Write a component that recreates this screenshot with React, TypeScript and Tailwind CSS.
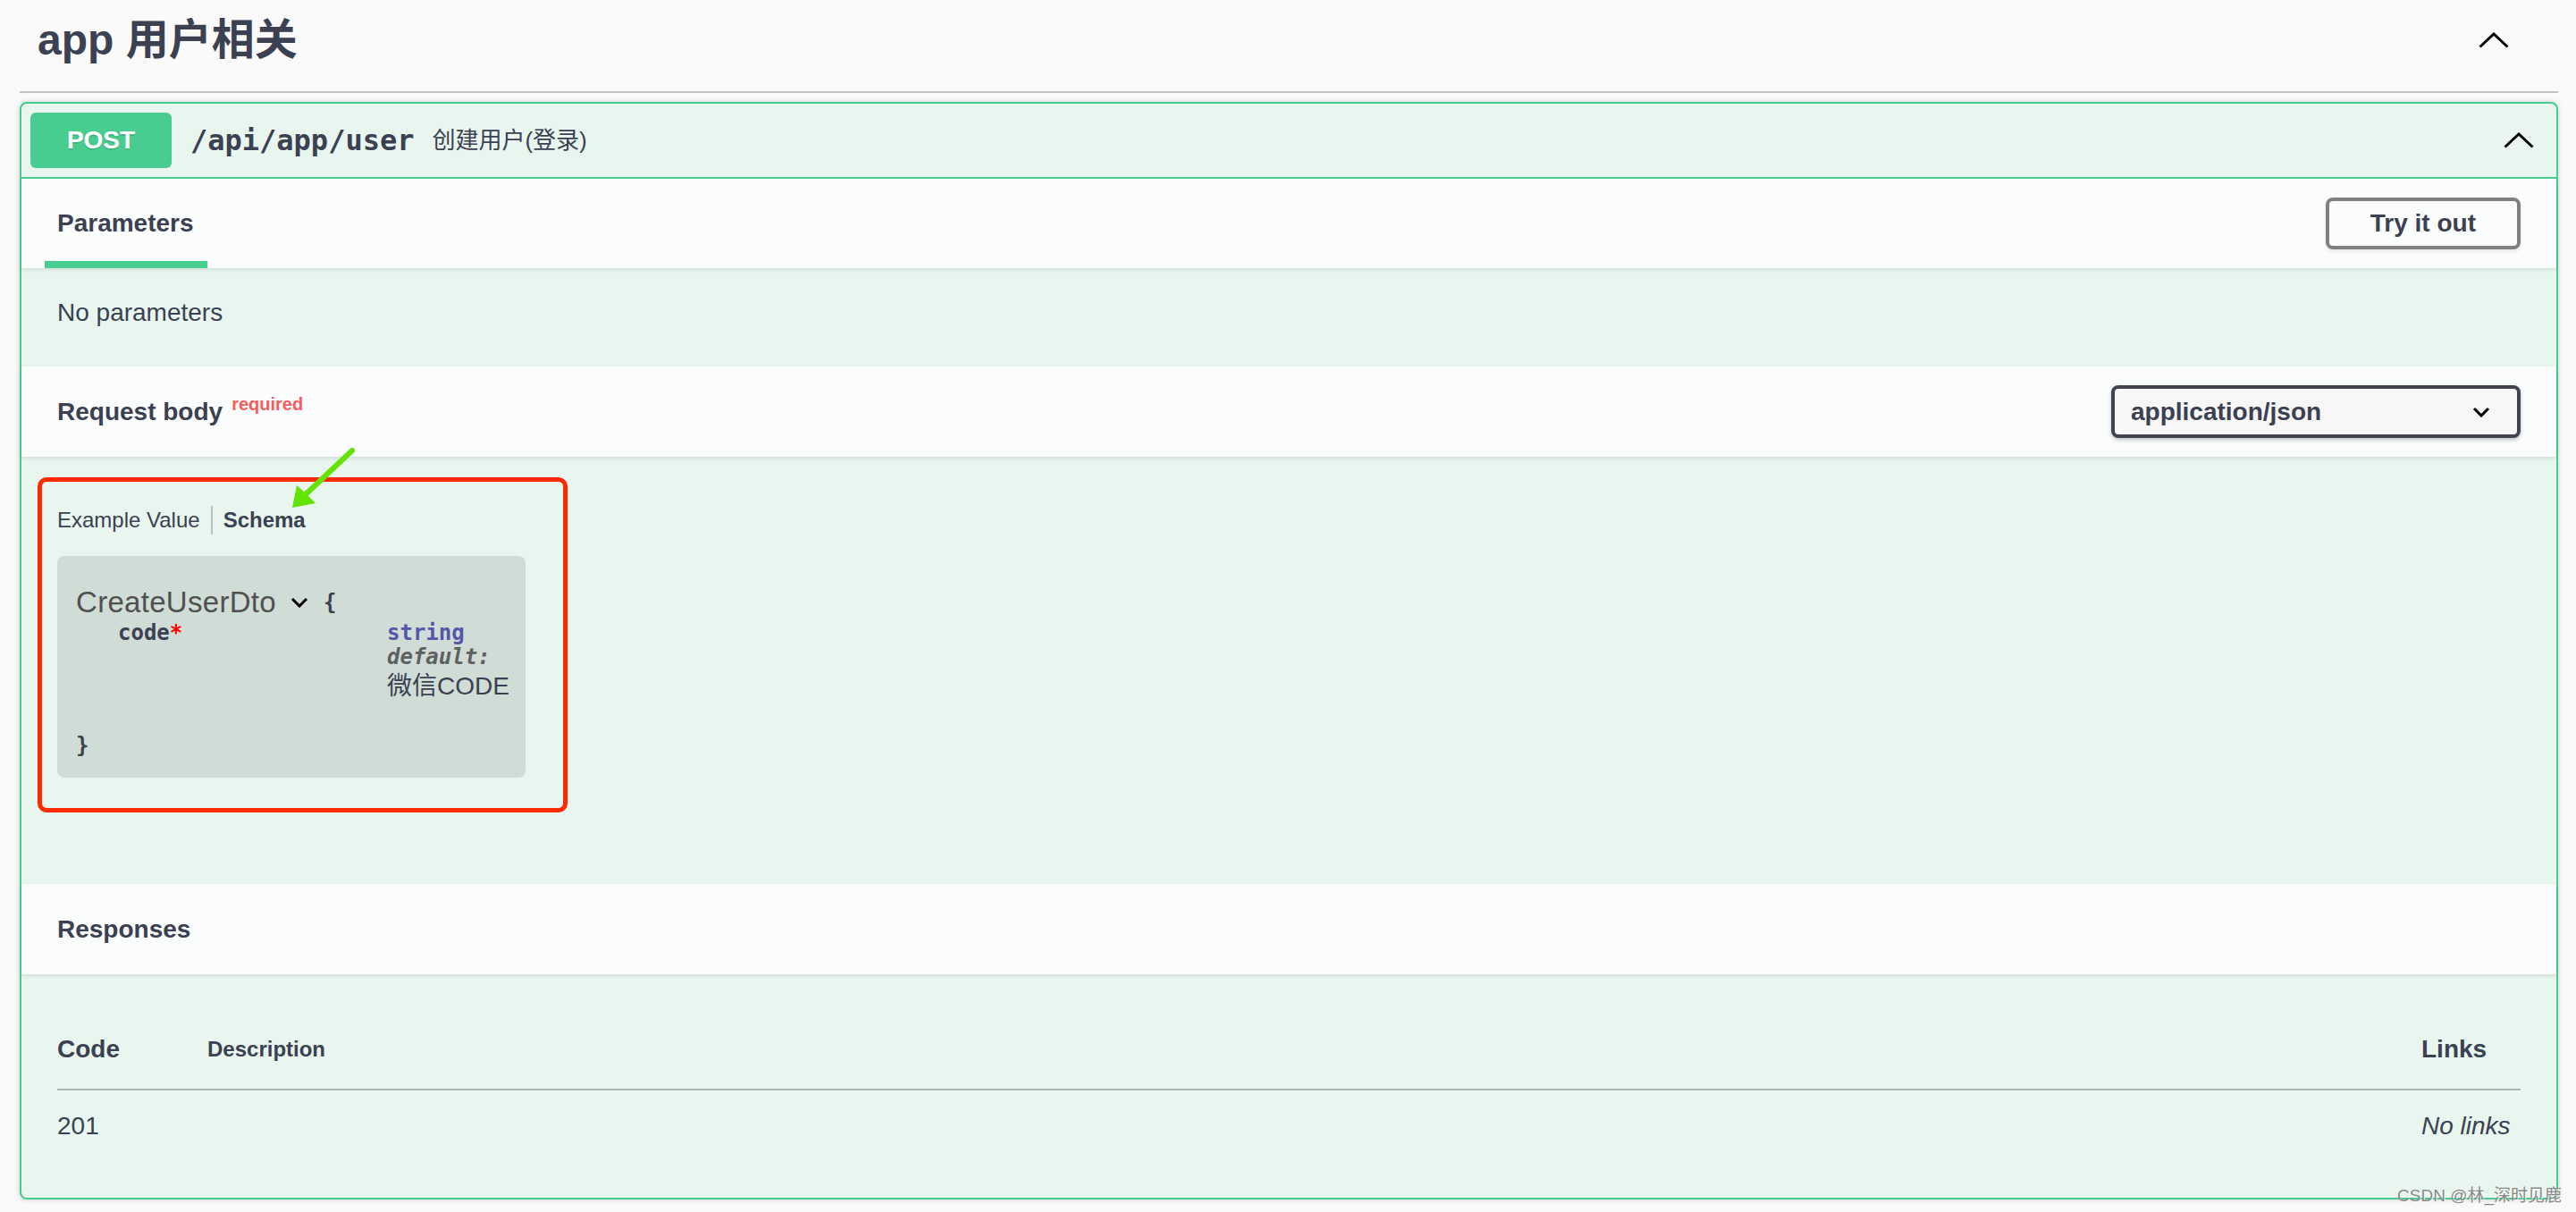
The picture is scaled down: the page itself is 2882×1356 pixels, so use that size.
function ChevronUp() {
    return (
        <svg width="34" height="18" viewBox="0 0 34 18" fill="none">
            <polyline points="1.5,16.5 17,2 32.5,16.5" stroke="#000" strokeWidth="3" />
        </svg>
    );
}

function ChevronDown({ w = 20, h = 12 }: { w?: number; h?: number }) {
    return (
        <svg width={w} height={h} viewBox="0 0 20 12" fill="none">
            <polyline points="2,2 10,10 18,2" stroke="#000" strokeWidth="3" />
        </svg>
    );
}

const sans = "font-['Liberation_Sans','Noto_Sans_CJK_SC',sans-serif]";
const mono = "font-['DejaVu_Sans_Mono',monospace]";

export default function App() {
    return (
        <div
            className={`relative w-[2882px] min-h-[1356px] bg-[#fafafa] text-[#3b4151] ${sans}`}
        >
            <div className="pl-[22px] pr-[20px]">
                {/* ── Tag heading ── */}
                <div className="flex items-center h-[104px] pb-[12px] pl-[20px] border-b-2 border-[#c1c2c7]">
                    <h3 className="text-[48px] font-bold leading-[60px]">app 用户相关</h3>
                    <div className="ml-auto mr-[55px] flex">
                        <ChevronUp />
                    </div>
                </div>

                {/* ── Operation block ── */}
                <div className="mt-[10px] border-2 border-[#49cc90] rounded-[8px] bg-[#e8f6ef] shadow-[0_0_6px_rgba(0,0,0,0.19)]">
                    {/* summary */}
                    <div className="flex items-center p-[10px] border-b-2 border-[#49cc90]">
                        <div className="w-[158px] h-[62px] rounded-[6px] bg-[#49cc90] flex items-center justify-center text-white text-[28px] font-bold [text-shadow:0_2px_0_rgba(0,0,0,0.1)]">
                            POST
                        </div>
                        <span className={`pl-[21px] pr-[20px] text-[32px] font-bold ${mono}`}>
                            /api/app/user
                        </span>
                        <span className="text-[26px]">创建用户(登录)</span>
                        <div className="ml-auto mr-[15px] flex">
                            <ChevronUp />
                        </div>
                    </div>

                    {/* parameters header */}
                    <div className="flex items-center h-[100px] px-[40px] bg-[#fafdfc] shadow-[0_2px_4px_rgba(0,0,0,0.1)]">
                        <div className="relative h-full flex items-center">
                            <h4 className="text-[28px] font-bold leading-[32px]">Parameters</h4>
                            <span className="absolute bottom-0 left-[-14px] right-[-15px] h-[8px] bg-[#49cc90]" />
                        </div>
                        <button className="ml-auto h-[58px] px-[46px] border-4 border-[#808080] rounded-[8px] text-[28px] font-bold shadow-[0_2px_4px_rgba(0,0,0,0.1)]">
                            Try it out
                        </button>
                    </div>

                    {/* parameters body */}
                    <div className="h-[110px] px-[40px] pt-[34px]">
                        <p className="text-[28px] leading-[32px]">No parameters</p>
                    </div>

                    {/* request body header */}
                    <div className="flex items-center h-[101px] px-[40px] bg-[#fafdfc] shadow-[0_2px_4px_rgba(0,0,0,0.1)]">
                        <h4 className="text-[28px] font-bold leading-[32px]">Request body</h4>
                        <span className="relative -top-[9px] ml-[10px] text-[20px] font-bold text-[#f85d5d]">
                            required
                        </span>
                        <div className="ml-auto w-[458px] h-[59px] border-4 border-[#41444e] rounded-[8px] bg-[#f7f7f7] pl-[18px] pr-[30px] flex items-center shadow-[0_2px_4px_rgba(0,0,0,0.25)]">
                            <span className="text-[28px] font-bold">application/json</span>
                            <div className="ml-auto flex">
                                <ChevronDown />
                            </div>
                        </div>
                    </div>

                    {/* request body */}
                    <div className="relative h-[478px] px-[40px] pt-[55px]">
                        <div className="flex items-center text-[24px] leading-[32px]">
                            <span className="pr-[12px]">Example Value</span>
                            <span className="w-[2px] h-[32px] bg-[rgba(0,0,0,0.2)]" />
                            <span className="pl-[12px] font-bold">Schema</span>
                        </div>

                        <div className="mt-[24px] w-[524px] h-[248px] rounded-[8px] bg-[rgba(0,0,0,0.1)] pl-[21px] pt-[32px]">
                            <div className="flex items-center h-[40px]">
                                <span className="text-[33px] tracking-[0.3px] leading-[40px] text-[#505050]">
                                    CreateUserDto
                                </span>
                                <span className="ml-[16px] flex">
                                    <ChevronDown />
                                </span>
                                <span className={`ml-[17px] text-[24px] font-bold ${mono}`}>{"{"}</span>
                            </div>
                            <div className="flex">
                                <div className={`w-[348px] pl-[47px] text-[24px] leading-[28px] font-bold ${mono}`}>
                                    code<span className="text-[#ff0000]">*</span>
                                </div>
                                <div className="flex flex-col">
                                    <span className={`text-[24px] leading-[28px] font-bold text-[#5555aa] ${mono}`}>
                                        string
                                    </span>
                                    <span className={`text-[24px] leading-[26px] font-bold italic text-[#606060] ${mono}`}>
                                        default:
                                    </span>
                                    <span className="text-[28px] leading-[40px]">微信CODE</span>
                                </div>
                            </div>
                            <div className={`mt-[30px] text-[24px] leading-[32px] font-bold ${mono}`}>{"}"}</div>
                        </div>

                        {/* annotation: red frame */}
                        <div className="absolute left-[18px] top-[23px] w-[593px] h-[375px] border-[5px] border-[#ff2a00] rounded-[10px]" />

                        {/* annotation: green arrow */}
                        <svg
                            className="absolute left-[296px] top-[-14px]"
                            width="90"
                            height="80"
                            viewBox="0 0 90 80"
                            fill="none"
                        >
                            <line x1="74" y1="7" x2="21" y2="57" stroke="#62e400" strokeWidth="6" strokeLinecap="round" />
                            <polygon points="7,71 12,46 22,55 33,66" fill="#62e400" />
                        </svg>
                    </div>

                    {/* responses header */}
                    <div className="flex items-center h-[101px] px-[40px] bg-[#fafdfc] shadow-[0_2px_4px_rgba(0,0,0,0.1)]">
                        <h4 className="text-[28px] font-bold leading-[32px]">Responses</h4>
                    </div>

                    {/* responses table */}
                    <div className="px-[40px] py-[40px]">
                        <div className="flex items-center py-[24px] border-b-2 border-[#a9b5b3]">
                            <span className="w-[168px] text-[28px] font-bold leading-[40px]">Code</span>
                            <span className="flex-1 text-[24px] font-bold leading-[40px]">Description</span>
                            <span className="w-[111px] text-[28px] font-bold leading-[40px]">Links</span>
                        </div>
                        <div className="flex items-center py-[20px]">
                            <span className="w-[168px] text-[28px] leading-[40px]">201</span>
                            <span className="flex-1" />
                            <span className="w-[111px] text-[28px] italic leading-[40px]">No links</span>
                        </div>
                    </div>
                </div>
            </div>

            {/* watermark */}
            <span className="absolute right-[16px] top-[1325px] whitespace-nowrap text-[19px] leading-[26px] text-[#8a8a8a] [text-shadow:1px_1px_0_rgba(255,255,255,0.8)]">
                CSDN @林_深时见鹿
            </span>
        </div>
    );
}
